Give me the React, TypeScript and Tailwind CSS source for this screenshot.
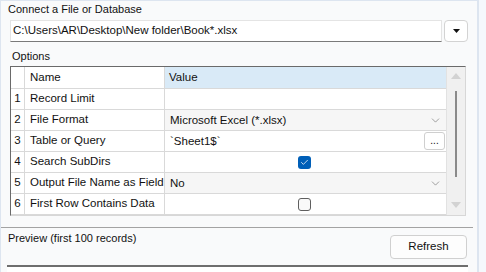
import { Check, ChevronDown } from 'lucide-react'

type Row = {
  n: number
  name: string
  kind: 'text' | 'combo' | 'browse' | 'check'
  value?: string
  checked?: boolean
}

const ROWS: Row[] = [
  { n: 1, name: 'Record Limit', kind: 'text', value: '' },
  { n: 2, name: 'File Format', kind: 'combo', value: 'Microsoft Excel (*.xlsx)' },
  { n: 3, name: 'Table or Query', kind: 'browse', value: '`Sheet1$`' },
  { n: 4, name: 'Search SubDirs', kind: 'check', checked: true },
  { n: 5, name: 'Output File Name as Field', kind: 'combo', value: 'No' },
  { n: 6, name: 'First Row Contains Data', kind: 'check', checked: false },
]

function ValueCell({ row }: { row: Row }) {
  if (row.kind === 'combo') {
    return (
      <div className="flex h-full items-center justify-between bg-[#f6f6f6] pl-[5px] pr-[4px]">
        <span>{row.value}</span>
        <ChevronDown size={13} strokeWidth={1} className="text-[#555]" />
      </div>
    )
  }
  if (row.kind === 'browse') {
    return (
      <div className="flex h-full items-center justify-between pl-[5px] pr-[1px]">
        <span>{row.value}</span>
        <div className="flex h-[18px] w-[21px] items-end justify-center rounded-[3px] border border-[#cfcfcf] bg-white pb-[3px] text-[10px] leading-none">
          ...
        </div>
      </div>
    )
  }
  if (row.kind === 'check') {
    return (
      <div className="flex h-full items-center justify-center pr-[2px]">
        {row.checked ? (
          <div className="flex h-[13px] w-[13px] items-center justify-center rounded-[3px] bg-[#005fb8]">
            <Check size={9} strokeWidth={2} className="text-white" />
          </div>
        ) : (
          <div className="h-[13px] w-[13px] rounded-[3px] border border-[#5f5f5f] bg-[#f9f9f9]" />
        )}
      </div>
    )
  }
  return <div className="h-full px-[5px]">{row.value}</div>
}

export default function App() {
  return (
    <div className="flex h-[272px] w-[486px] overflow-hidden bg-[#f5f8fc] font-['Liberation_Sans',Arial,sans-serif] text-[11px] text-[#111]">
      <div className="flex w-[479px] shrink-0 flex-col border-l border-r-2 border-t border-[#dde5f0] bg-[#f9fafb] pt-[1px]">
        {/* connect */}
        <div className="pl-[7px] leading-[14px]">Connect a File or Database</div>
        <div className="mt-[4px] flex gap-[2px] pl-[9px]">
          <div className="flex h-[22px] w-[432px] items-center border border-b-[#7a7a7a] border-[#e4e4e4] bg-white px-[2px] text-[11.5px]">
            C:\Users\AR\Desktop\New folder\Book*.xlsx
          </div>
          <div className="flex h-[22px] w-[24px] items-center justify-center rounded-[4px] border border-[#d3d3d3] bg-white">
            <svg width="7" height="4" viewBox="0 0 7 4">
              <path d="M0 0H7L3.5 4Z" fill="#111" />
            </svg>
          </div>
        </div>

        {/* options */}
        <div className="mt-[7px] pl-[11px] leading-[14px]">Options</div>
        <div className="ml-[9px] mt-[3px] flex h-[152px] w-[456px] border-b border-l border-r border-t border-b-[#d7d7d7] border-l-[#6a6a6a] border-r-[#d7d7d7] border-t-[#6a6a6a] bg-white text-[11.5px]">
          <div className="flex-1">
            <div className="flex h-[21px]">
              <div className="w-[14px] border-r border-[#d9d9d9]" />
              <div className="flex w-[140px] items-center border-r border-[#d9d9d9] pl-[5px]">Name</div>
              <div className="flex flex-1 items-center bg-[#d9eaf7] pl-[4px]">Value</div>
            </div>
            {ROWS.map((r) => (
              <div key={r.n} className="flex h-[21px] border-t border-[#d9d9d9]">
                <div className="flex w-[14px] items-center justify-center border-r border-[#d9d9d9]">{r.n}</div>
                <div className="flex w-[140px] items-center overflow-hidden whitespace-nowrap border-r border-[#d9d9d9] pl-[5px]">
                  {r.name}
                </div>
                <div className="flex-1 whitespace-nowrap leading-[20px]">
                  <ValueCell row={r} />
                </div>
              </div>
            ))}
            <div className="border-t border-[#d9d9d9]" />
          </div>
          {/* scrollbar */}
          <div className="flex w-[19px] flex-col items-center border-l border-[#e2e2e2] bg-[#f0f0f0]">
            <svg width="10" height="6" viewBox="0 0 10 6" className="mt-[6px]">
              <path d="M0 6L5 0L10 6Z" fill="#d2d2d2" />
            </svg>
            <div className="mt-[12px] h-[86px] w-[2px] bg-[#8a8a8a]" />
            <div className="flex-1" />
            <svg width="10" height="6" viewBox="0 0 10 6" className="mb-[7px]">
              <path d="M0 0L10 0L5 6Z" fill="#d2d2d2" />
            </svg>
          </div>
        </div>

        {/* splitter */}
        <div className="mt-[11px] w-[472px] border-t border-[#a3a3a3]" />

        {/* preview */}
        <div className="flex flex-col">
          <div className="mt-[3px] pl-[7px] leading-[14px]">Preview (first 100 records)</div>
          <div className="-mt-[10px] flex justify-end pr-[10px]">
            <button className="h-[24px] w-[77px] rounded-[4px] border border-[#d0d0d0] bg-[#fdfdfd] text-[11.5px]">
              Refresh
            </button>
          </div>
          <div className="ml-[6px] mt-[6px] h-[10px] w-[461px] border-t-2 border-[#6e6e6e] bg-white" />
        </div>
      </div>
    </div>
  )
}
